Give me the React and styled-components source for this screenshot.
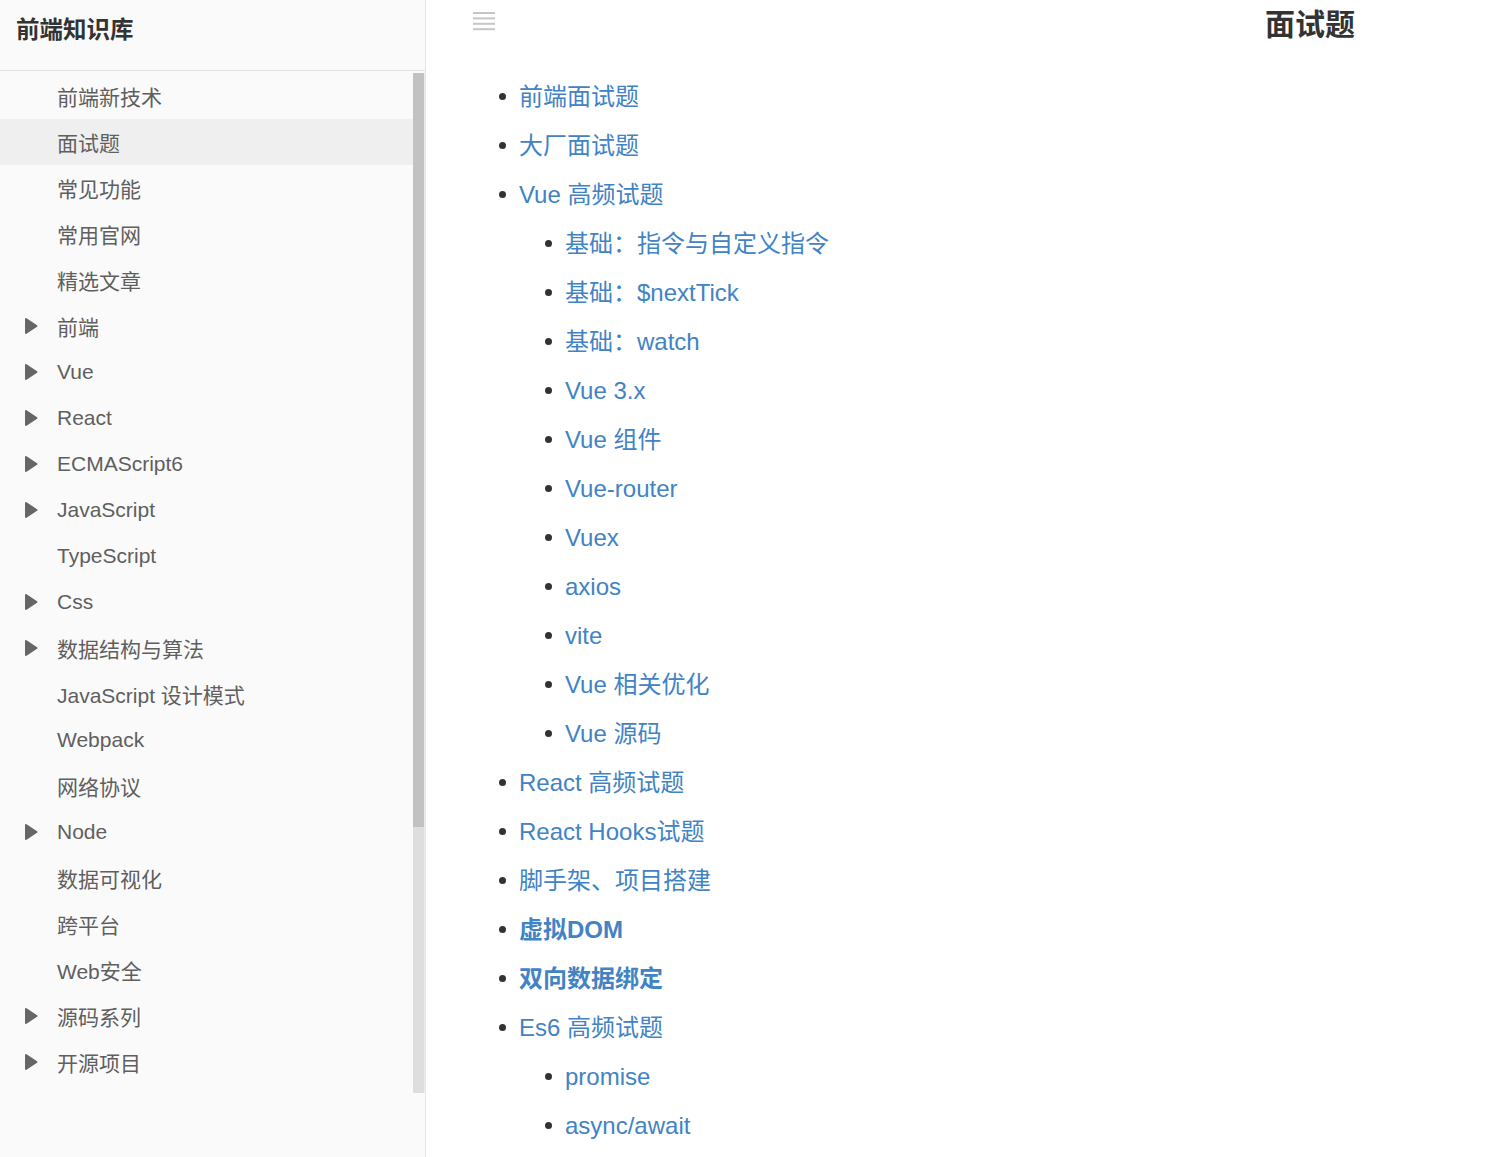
import React from 'react'
import styled, { createGlobalStyle } from 'styled-components'

const sidebarItems = [
  { text: '前端新技术' },
  { text: '面试题', active: true },
  { text: '常见功能' },
  { text: '常用官网' },
  { text: '精选文章' },
  { text: '前端', folder: true },
  { text: 'Vue', folder: true },
  { text: 'React', folder: true },
  { text: 'ECMAScript6', folder: true },
  { text: 'JavaScript', folder: true },
  { text: 'TypeScript' },
  { text: 'Css', folder: true },
  { text: '数据结构与算法', folder: true },
  { text: 'JavaScript 设计模式' },
  { text: 'Webpack' },
  { text: '网络协议' },
  { text: 'Node', folder: true },
  { text: '数据可视化' },
  { text: '跨平台' },
  { text: 'Web安全' },
  { text: '源码系列', folder: true },
  { text: '开源项目', folder: true },
]

const outline = [
  { text: '前端面试题' },
  { text: '大厂面试题' },
  {
    text: 'Vue 高频试题',
    children: [
      '基础：指令与自定义指令',
      '基础：$nextTick',
      '基础：watch',
      'Vue 3.x',
      'Vue 组件',
      'Vue-router',
      'Vuex',
      'axios',
      'vite',
      'Vue 相关优化',
      'Vue 源码',
    ],
  },
  { text: 'React 高频试题' },
  { text: 'React Hooks试题' },
  { text: '脚手架、项目搭建' },
  { text: '虚拟DOM', bold: true },
  { text: '双向数据绑定', bold: true },
  { text: 'Es6 高频试题', children: ['promise', 'async/await'] },
]

function Arrow() {
  return (
    <svg width="14" height="18" viewBox="0 0 14 18">
      <path d="M2 2 L12.5 9 L2 16 Z" fill="#666" stroke="#666" strokeWidth="2" strokeLinejoin="round" />
    </svg>
  )
}

function MenuIcon() {
  return (
    <svg width="22" height="19" viewBox="0 0 22 19">
      {[0, 5.4, 10.8, 16.2].map(y => (
        <rect key={y} x="0" y={y} width="22" height="2" fill="#c6c6c6" />
      ))}
    </svg>
  )
}

export default function App() {
  return (
    <>
      <GlobalStyle />
      <Page>
        <Sidebar>
          <SidebarHeader>前端知识库</SidebarHeader>
          <SidebarBody>
            <FileList>
              {sidebarItems.map(item => (
                <FileRow key={item.text} active={item.active}>
                  <ArrowSlot>{item.folder && <Arrow />}</ArrowSlot>
                  {item.text}
                </FileRow>
              ))}
            </FileList>
            <ScrollTrack>
              <ScrollThumb />
            </ScrollTrack>
          </SidebarBody>
        </Sidebar>

        <Main>
          <TopBar>
            <MenuIcon />
            <DocTitle>面试题</DocTitle>
          </TopBar>
          <Outline>
            {outline.map(item => (
              <Item key={item.text}>
                <Link bold={item.bold}>{item.text}</Link>
                {item.children && (
                  <SubOutline>
                    {item.children.map(child => (
                      <Item key={child}>
                        <Link>{child}</Link>
                      </Item>
                    ))}
                  </SubOutline>
                )}
              </Item>
            ))}
          </Outline>
        </Main>
      </Page>
    </>
  )
}

const GlobalStyle = createGlobalStyle`
  html, body {
    margin: 0;
    height: 100%;
    overflow: hidden;
  }
  body {
    font-family: "Liberation Sans", "Noto Sans CJK SC", sans-serif;
    background: #fff;
  }
`

const Page = styled.div`
  display: flex;
  height: 1157px;
`

const Sidebar = styled.aside`
  width: 425px;
  flex-shrink: 0;
  background: #fafafa;
  border-right: 1px solid #e6e6e6;
  display: flex;
  flex-direction: column;
`

const SidebarHeader = styled.div`
  height: 71px;
  box-sizing: border-box;
  border-bottom: 1px solid #e2e2e2;
  display: flex;
  align-items: center;
  padding: 0 0 14px 16px;
  font-size: 23.5px;
  font-weight: bold;
  color: #333;
`

const SidebarBody = styled.div`
  margin-top: 2px;
  height: 1020px;
  display: flex;
`

const FileList = styled.div`
  flex: 1;
  overflow: hidden;
`

const FileRow = styled.div`
  height: 46px;
  display: flex;
  align-items: center;
  padding-left: 24px;
  font-size: 21px;
  color: #5f5f5f;
  background: ${p => (p.active ? '#efefef' : 'transparent')};
`

const ArrowSlot = styled.span`
  width: 33px;
  display: flex;
  align-items: center;
`

const ScrollTrack = styled.div`
  width: 11px;
  background: #dedede;
  border-right: 1px solid #ebebeb;
  display: flex;
  flex-direction: column;
`

const ScrollThumb = styled.div`
  height: 754px;
  background: #c2c2c2;
`

const Main = styled.main`
  flex: 1;
  background: #fff;
`

const TopBar = styled.div`
  height: 48px;
  display: flex;
  align-items: center;
  padding: 0 145px 4px 47px;
  box-sizing: border-box;

  svg {
    margin-top: -2px;
  }
`

const DocTitle = styled.h1`
  margin: 0 0 0 auto;
  font-size: 30px;
  font-weight: bold;
  color: #333;
`

const Outline = styled.ul`
  list-style: none;
  margin: 24px 0 0;
  padding: 0 0 0 66px;
`

const SubOutline = styled.ul`
  list-style: none;
  margin: 0;
  padding: 0 0 0 19px;
`

const Item = styled.li`
  position: relative;
  padding-left: 27px;

  &::before {
    content: '';
    position: absolute;
    left: 6.5px;
    top: 21px;
    width: 7px;
    height: 7px;
    border-radius: 50%;
    background: #333;
  }
`

const Link = styled.span`
  display: block;
  height: 49px;
  line-height: 49px;
  font-size: 24px;
  color: #4183c4;
  font-weight: ${p => (p.bold ? 'bold' : 'normal')};
  white-space: nowrap;
`
